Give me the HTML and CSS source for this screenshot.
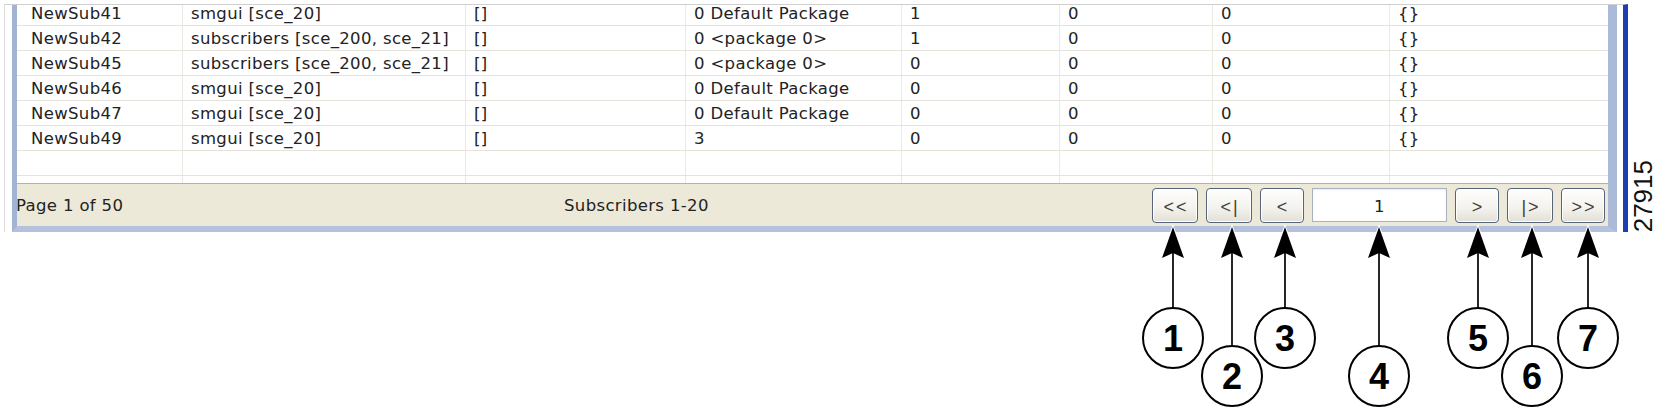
FILE: index.html
```html
<!DOCTYPE html>
<html>
<head>
<meta charset="utf-8">
<title>Subscriber list paging</title>
<link rel="stylesheet" href="styles.css">
</head>
<body>
<div class="page">
  <div class="screen">
    <div class="panel">
      <div class="grid">
        <div class="row first">
          <div class="cell c1">NewSub41</div><div class="cell">smgui [sce_20]</div><div class="cell">[]</div><div class="cell">0 Default Package</div><div class="cell">1</div><div class="cell">0</div><div class="cell">0</div><div class="cell last">{}</div>
        </div>
        <div class="row">
          <div class="cell c1">NewSub42</div><div class="cell">subscribers [sce_200, sce_21]</div><div class="cell">[]</div><div class="cell">0 &lt;package 0&gt;</div><div class="cell">1</div><div class="cell">0</div><div class="cell">0</div><div class="cell last">{}</div>
        </div>
        <div class="row">
          <div class="cell c1">NewSub45</div><div class="cell">subscribers [sce_200, sce_21]</div><div class="cell">[]</div><div class="cell">0 &lt;package 0&gt;</div><div class="cell">0</div><div class="cell">0</div><div class="cell">0</div><div class="cell last">{}</div>
        </div>
        <div class="row">
          <div class="cell c1">NewSub46</div><div class="cell">smgui [sce_20]</div><div class="cell">[]</div><div class="cell">0 Default Package</div><div class="cell">0</div><div class="cell">0</div><div class="cell">0</div><div class="cell last">{}</div>
        </div>
        <div class="row">
          <div class="cell c1">NewSub47</div><div class="cell">smgui [sce_20]</div><div class="cell">[]</div><div class="cell">0 Default Package</div><div class="cell">0</div><div class="cell">0</div><div class="cell">0</div><div class="cell last">{}</div>
        </div>
        <div class="row">
          <div class="cell c1">NewSub49</div><div class="cell">smgui [sce_20]</div><div class="cell">[]</div><div class="cell">3</div><div class="cell">0</div><div class="cell">0</div><div class="cell">0</div><div class="cell last">{}</div>
        </div>
        <div class="row">
          <div class="cell c1"></div><div class="cell"></div><div class="cell"></div><div class="cell"></div><div class="cell"></div><div class="cell"></div><div class="cell"></div><div class="cell last"></div>
        </div>
        <div class="row partial">
          <div class="cell c1"></div><div class="cell"></div><div class="cell"></div><div class="cell"></div><div class="cell"></div><div class="cell"></div><div class="cell"></div><div class="cell last"></div>
        </div>
      </div>
      <div class="statusbar">
        <div class="page-label">Page 1 of 50</div>
        <div class="range-label">Subscribers 1-20</div>
        <div class="nav">
          <div class="btn wide">&lt;&lt;</div>
          <div class="btn wide">&lt;|</div>
          <div class="btn">&lt;</div>
          <div class="field">1</div>
          <div class="btn">&gt;</div>
          <div class="btn wide">|&gt;</div>
          <div class="btn">&gt;&gt;</div>
        </div>
      </div>
    </div>
  </div>
  <div class="figid">27915</div>

  <svg class="callouts" width="1666" height="416" viewBox="0 0 1666 416">
    <g class="arrow">
      <path d="M1173 227 L1184 258 L1173 253 L1162 258 Z"/>
      <line x1="1173" y1="253" x2="1173" y2="308"/>
      <circle cx="1173" cy="338" r="30"/>
      <text x="1173" y="351">1</text>
    </g>
    <g class="arrow">
      <path d="M1232 227 L1243 258 L1232 253 L1221 258 Z"/>
      <line x1="1232" y1="253" x2="1232" y2="346"/>
      <circle cx="1232" cy="376" r="30"/>
      <text x="1232" y="389">2</text>
    </g>
    <g class="arrow">
      <path d="M1285 227 L1296 258 L1285 253 L1274 258 Z"/>
      <line x1="1285" y1="253" x2="1285" y2="308"/>
      <circle cx="1285" cy="338" r="30"/>
      <text x="1285" y="351">3</text>
    </g>
    <g class="arrow">
      <path d="M1379 227 L1390 258 L1379 253 L1368 258 Z"/>
      <line x1="1379" y1="253" x2="1379" y2="346"/>
      <circle cx="1379" cy="376" r="30"/>
      <text x="1379" y="389">4</text>
    </g>
    <g class="arrow">
      <path d="M1478 227 L1489 258 L1478 253 L1467 258 Z"/>
      <line x1="1478" y1="253" x2="1478" y2="308"/>
      <circle cx="1478" cy="338" r="30"/>
      <text x="1478" y="351">5</text>
    </g>
    <g class="arrow">
      <path d="M1532 227 L1543 258 L1532 253 L1521 258 Z"/>
      <line x1="1532" y1="253" x2="1532" y2="346"/>
      <circle cx="1532" cy="376" r="30"/>
      <text x="1532" y="389">6</text>
    </g>
    <g class="arrow">
      <path d="M1588 227 L1599 258 L1588 253 L1577 258 Z"/>
      <line x1="1588" y1="253" x2="1588" y2="308"/>
      <circle cx="1588" cy="338" r="30"/>
      <text x="1588" y="351">7</text>
    </g>
  </svg>
</div>
</body>
</html>
```

FILE: styles.css
```css
html, body {
  margin: 0;
  padding: 0;
  background: #ffffff;
}

.page {
  position: relative;
  width: 1666px;
  height: 416px;
  display: flex;
  align-items: flex-start;
  overflow: hidden;
  font-family: "DejaVu Sans", Verdana, sans-serif;
  font-size: 16.5px;
  letter-spacing: 0.35px;
  color: #222222;
}

.screen {
  margin: 4px 0 0 4px;
  border-top: 1px solid #cfcfcf;
  border-left: 1px solid #dedede;
  border-right: 5px solid #1e3db0;
  padding-left: 7px;
  padding-right: 6px;
  display: flex;
}

.panel {
  width: 1591px;
  border-left: 5px solid #a2b3d4;
  border-right: 9px solid #aabad8;
  border-bottom: 6px solid #b4c2dd;
  background: #ffffff;
}

.grid {
  display: flex;
  flex-direction: column;
}

.row {
  display: grid;
  grid-template-columns: 166px 283px 220px 216px 158px 153px 177px 1fr;
  height: 25px;
  box-sizing: border-box;
  border-bottom: 1px solid #e5e3da;
}

.row.first {
  height: 21px;
}

.row.partial {
  height: 7px;
  border-bottom: none;
}

.cell {
  border-right: 1px solid #ebe9e1;
  padding: 2px 0 0 8px;
  line-height: 22px;
  white-space: nowrap;
  overflow: hidden;
}

.row.first .cell {
  padding-top: 0;
  line-height: 17px;
}

.cell.c1 {
  padding-left: 14px;
}

.cell.last {
  border-right: none;
}

.statusbar {
  height: 42px;
  border-top: 1px solid #b6b3a4;
  background: #ece9d8;
  display: flex;
  align-items: center;
  padding-right: 3px;
}

.page-label {
  width: 548px;
  padding-left: 0;
  margin-left: -1px;
}

.range-label {
  white-space: nowrap;
}

.nav {
  margin-left: auto;
  align-self: flex-start;
  margin-top: 4px;
  display: flex;
  gap: 8px;
}

.btn {
  width: 44px;
  height: 35px;
  box-sizing: border-box;
  border: 1px solid #56657a;
  border-radius: 4px;
  background: linear-gradient(#fefefd 0%, #f4f3ee 55%, #e2e0d6 100%);
  box-shadow: inset 0 0 0 1px #ffffff;
  font-family: "Liberation Sans", Arial, sans-serif;
  font-size: 18px;
  letter-spacing: 2px;
  color: #404040;
  display: flex;
  align-items: center;
  justify-content: center;
  padding: 3px 0 0 2px;
}

.btn.wide {
  width: 46px;
}

.field {
  width: 135px;
  height: 34px;
  box-sizing: border-box;
  border: 1px solid #a8b1c0;
  background: #ffffff;
  box-shadow: inset 0 1px 2px rgba(0, 0, 0, 0.08);
  display: flex;
  align-items: center;
  justify-content: center;
  padding-top: 2px;
}

.figid {
  margin-left: 5px;
  margin-top: 160px;
  writing-mode: vertical-rl;
  transform: rotate(180deg);
  font-family: "Liberation Sans", Arial, sans-serif;
  font-size: 26px;
  letter-spacing: 0;
  line-height: 21px;
  color: #111111;
}

.callouts {
  position: absolute;
  left: 0;
  top: 0;
  pointer-events: none;
}

.callouts path {
  fill: #000000;
  stroke: #ffffff;
  stroke-width: 2;
  paint-order: stroke;
}

.callouts line {
  stroke: #000000;
  stroke-width: 1.7;
}

.callouts circle {
  fill: #ffffff;
  stroke: #000000;
  stroke-width: 2;
}

.callouts text {
  font-family: "Liberation Sans", Arial, sans-serif;
  font-weight: bold;
  font-size: 36px;
  letter-spacing: 0;
  text-anchor: middle;
  fill: #000000;
}
```
